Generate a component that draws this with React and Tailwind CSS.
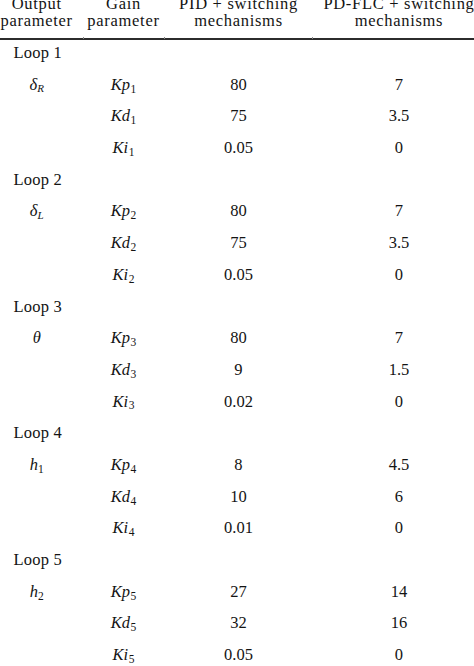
import React from "react";

const subIt = "italic text-[11px]";
const subUp = "text-[11.5px]";

const loops = [
  { n: 1, sym: <span><i>δ</i><sub className={subIt}>R</sub></span>, rows: [["p", "80", "7"], ["d", "75", "3.5"], ["i", "0.05", "0"]] },
  { n: 2, sym: <span><i>δ</i><sub className={subIt}>L</sub></span>, rows: [["p", "80", "7"], ["d", "75", "3.5"], ["i", "0.05", "0"]] },
  { n: 3, sym: <span><i>θ</i></span>, rows: [["p", "80", "7"], ["d", "9", "1.5"], ["i", "0.02", "0"]] },
  { n: 4, sym: <span><i>h</i><sub className={subUp}>1</sub></span>, rows: [["p", "8", "4.5"], ["d", "10", "6"], ["i", "0.01", "0"]] },
  { n: 5, sym: <span><i>h</i><sub className={subUp}>2</sub></span>, rows: [["p", "27", "14"], ["d", "32", "16"], ["i", "0.05", "0"]] },
];

const cols = "grid grid-cols-[73.4px_100.2px_129.8px_191.2px]";

function Gain({ letter, n }) {
  return (
    <span>
      <i>K{letter}</i>
      <sub className={`${subUp} ml-[0.5px]`}>{n}</sub>
    </span>
  );
}

export default function App() {
  return (
    <div className="w-[474px] h-[666px] overflow-hidden bg-white text-[#141414] font-['Liberation_Serif',serif] text-[16.5px]">
      <div className="w-[494.6px]">
        <div className={`${cols} mt-[-5px] leading-[17.4px] tracking-[0.7px] text-center pb-[8.2px]`}>
          <div>Output<br />parameter</div>
          <div>Gain<br />parameter</div>
          <div>PID + switching<br />mechanisms</div>
          <div>PD-FLC + switching<br />mechanisms</div>
        </div>
        <div className="relative h-[1.6px] bg-[#2c2c2c]">
          <div className="absolute left-[83px] top-[-1px] w-[1px] h-[2px] bg-[#888]" />
          <div className="absolute left-[164px] top-[-1px] w-[1px] h-[2px] bg-[#888]" />
          <div className="absolute left-[312px] top-[-1px] w-[1px] h-[2px] bg-[#888]" />
        </div>
        <div className="mt-[-2.6px] leading-[31.7px]">
          {loops.map((lp) => (
            <div key={lp.n}>
              <div className="h-[31.7px] pl-[13.5px] tracking-[0.2px]">Loop {lp.n}</div>
              {lp.rows.map((r, i) => (
                <div key={i} className={`${cols} h-[31.7px] text-center`}>
                  <div>{i === 0 ? lp.sym : null}</div>
                  <div><Gain letter={r[0]} n={lp.n} /></div>
                  <div>{r[1]}</div>
                  <div>{r[2]}</div>
                </div>
              ))}
            </div>
          ))}
        </div>
      </div>
    </div>
  );
}
